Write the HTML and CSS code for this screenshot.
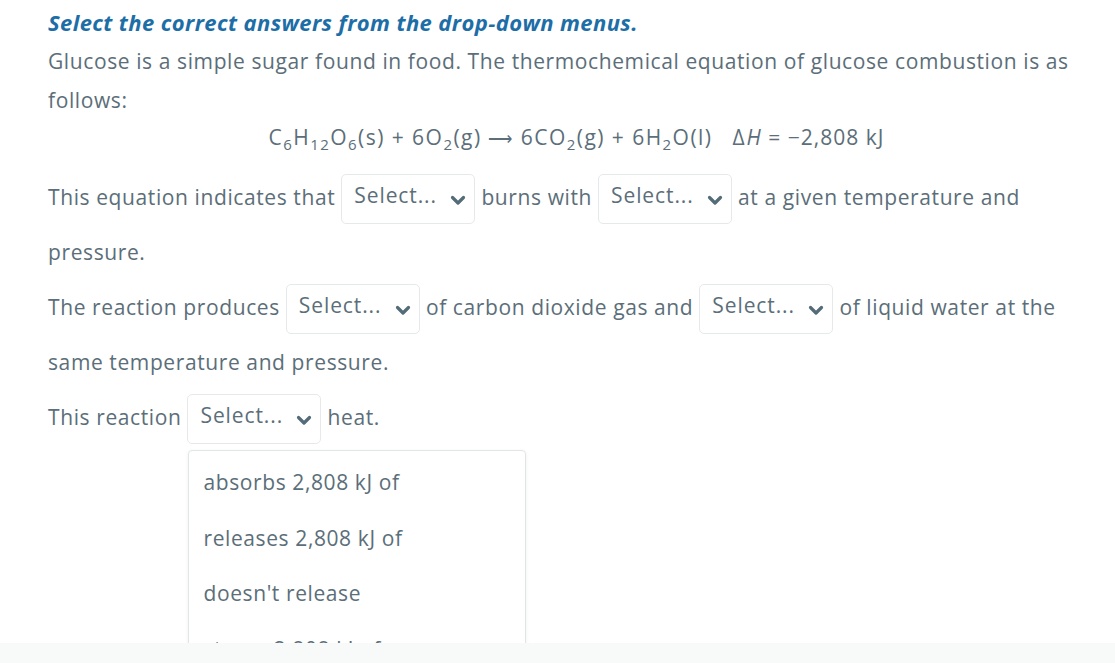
FILE: index.html
```html
<!DOCTYPE html>
<html>
<head>
<meta charset="utf-8">
<link rel="stylesheet" href="styles.css">
</head>
<body>
<div class="page">
  <h1 class="title">Select the correct answers from the drop-down menus.</h1>
  <p class="intro">Glucose is a simple sugar found in food. The thermochemical equation of glucose combustion is as follows:</p>
  <p class="equation"><span class="chem">C<sub>6</sub>H<sub>12</sub>O<sub>6</sub>(s) + 6O<sub>2</sub>(g) <span class="arrow">⟶</span> 6CO<sub>2</sub>(g) + 6H<sub>2</sub>O(l)</span><span class="dh"><span class="delta">Δ</span><i>H</i> = −2,808 kJ</span></p>
  <p class="blank-line">This equation indicates that <span class="select"><span class="sel-text">Select...</span><svg class="chev" viewBox="0 0 16 11"><path d="M2.5 2.5 L8 8 L13.5 2.5"/></svg></span> burns with <span class="select"><span class="sel-text">Select...</span><svg class="chev" viewBox="0 0 16 11"><path d="M2.5 2.5 L8 8 L13.5 2.5"/></svg></span> at a given temperature and pressure.</p>
  <p class="blank-line">The reaction produces <span class="select"><span class="sel-text">Select...</span><svg class="chev" viewBox="0 0 16 11"><path d="M2.5 2.5 L8 8 L13.5 2.5"/></svg></span> of carbon dioxide gas and <span class="select"><span class="sel-text">Select...</span><svg class="chev" viewBox="0 0 16 11"><path d="M2.5 2.5 L8 8 L13.5 2.5"/></svg></span> of liquid water at the same temperature and pressure.</p>
  <p class="blank-line">This reaction <span class="select-wrap"><span class="select"><span class="sel-text">Select...</span><svg class="chev" viewBox="0 0 16 11"><path d="M2.5 2.5 L8 8 L13.5 2.5"/></svg></span><span class="menu">
      <span class="option">absorbs 2,808 kJ of</span>
      <span class="option">releases 2,808 kJ of</span>
      <span class="option">doesn't release</span>
      <span class="option">stores 2,808 kJ of</span>
    </span></span> heat.</p>
</div>
<div class="footer"></div>
</body>
</html>
```
FILE: styles.css
```css
html, body {
  margin: 0;
  padding: 0;
  background: #ffffff;
}
body {
  font-family: "Open Sans", "Liberation Sans", sans-serif;
  color: #5b6e79;
}
.page {
  height: 643px;
  overflow: hidden;
  padding: 0 10px 0 48px;
  box-sizing: border-box;
}
.footer {
  height: 20px;
  background: #f8faf9;
}
.title {
  margin: 0;
  padding-top: 6px;
  font-size: 22px;
  line-height: 32px;
  font-weight: 700;
  font-style: italic;
  color: #1d6ea7;
  letter-spacing: 0.4px;
}
.intro {
  margin: 0;
  font-size: 21px;
  letter-spacing: 0.6px;
  line-height: 39px;
  padding-top: 4px;
}
.equation {
  margin: 0;
  text-align: center;
  font-size: 21px;
  line-height: 34px;
  padding-top: 0;
  padding-bottom: 2px;
}
.chem {
  letter-spacing: 1.45px;
}
.equation sub {
  font-size: 15px;
  line-height: 0;
  vertical-align: -5px;
}
.arrow {
  font-size: 17px;
}
.dh {
  margin-left: 20px;
  letter-spacing: 1px;
}
.delta {
  margin-right: 1px;
}
.blank-line {
  margin: 0;
  font-size: 21px;
  letter-spacing: 0.6px;
  line-height: 55px;
  padding-top: 12px;
}
.blank-line + .blank-line {
  padding-top: 0;
}
.select {
  display: inline-block;
  position: relative;
  box-sizing: border-box;
  width: 134px;
  height: 50px;
  padding: 0 0 0 12px;
  border: 1.5px solid #e6e9ea;
  border-radius: 5px;
  line-height: 44px;
  vertical-align: baseline;
  background: #fff;
  letter-spacing: 0.9px;
}
.sel-text {
  position: relative;
  top: -2px;
}
.chev {
  position: absolute;
  right: 8px;
  top: 20px;
  width: 16px;
  height: 11px;
}
.chev path {
  fill: none;
  stroke: #536c77;
  stroke-width: 3.2;
  stroke-linecap: round;
  stroke-linejoin: round;
}
.select-wrap {
  position: relative;
  display: inline-block;
  vertical-align: baseline;
}
.menu {
  position: absolute;
  left: 1px;
  top: 60px;
  width: 338px;
  box-sizing: border-box;
  border: 1px solid #e2e5e6;
  border-radius: 4px;
  box-shadow: 0 1px 4px rgba(0,0,0,0.06);
  background: #fff;
  display: flex;
  flex-direction: column;
  padding-top: 4px;
  z-index: 2;
  line-height: 55.5px;
}
.option {
  display: block;
  padding-left: 14px;
  white-space: nowrap;
}
```
